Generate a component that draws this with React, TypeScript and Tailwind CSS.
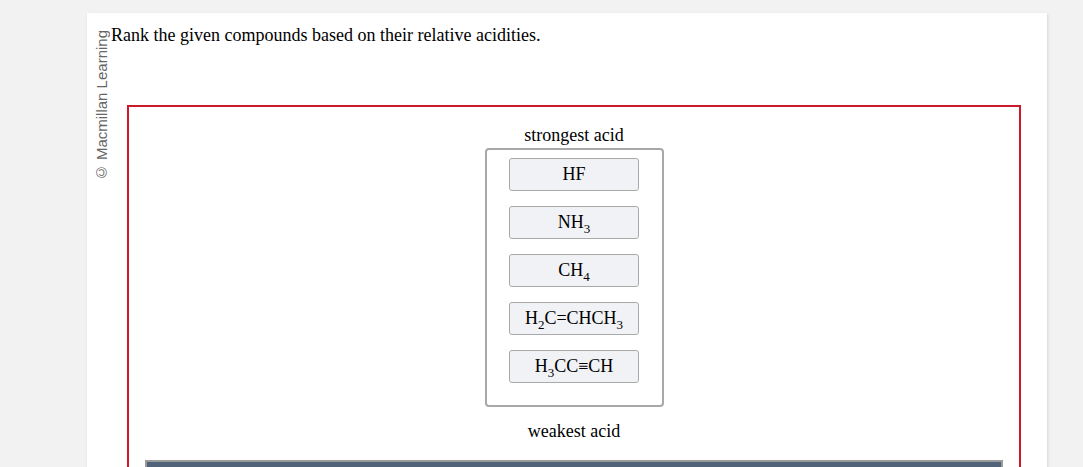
import React from 'react'

type Part = { t: string; sub?: boolean }

const compounds: Part[][] = [
  [{ t: 'HF' }],
  [{ t: 'NH' }, { t: '3', sub: true }],
  [{ t: 'CH' }, { t: '4', sub: true }],
  [{ t: 'H' }, { t: '2', sub: true }, { t: 'C=CHCH' }, { t: '3', sub: true }],
  [{ t: 'H' }, { t: '3', sub: true }, { t: 'CC≡CH' }],
]

function Formula({ parts }: { parts: Part[] }) {
  return (
    <span>
      {parts.map((p, i) =>
        p.sub ? (
          <sub key={i} className="text-[13px] relative top-[5px] leading-none">{p.t}</sub>
        ) : (
          <span key={i}>{p.t}</span>
        )
      )}
    </span>
  )
}

export default function App() {
  return (
    <div className="h-[467px] overflow-hidden bg-[#f2f2f2] pt-[13px] pl-[87px]">
      <div className="w-[960px] h-[480px] bg-white shadow-[1px_1px_3px_rgba(0,0,0,0.12)] flex">
        {/* copyright strip */}
        <div className="w-[24px] pl-[8px] pt-[17px]">
          <div className="[writing-mode:vertical-rl] rotate-180 text-[15px] leading-[14px] text-[#666] font-['Liberation_Sans',Arial,sans-serif]">
            © Macmillan Learning
          </div>
        </div>

        <div className="flex-1 font-['Liberation_Serif','Times_New_Roman',serif] text-black">
          <p className="text-[18px] leading-[20px] pt-[12px]">
            Rank the given compounds based on their relative acidities.
          </p>

          {/* ranking area */}
          <div className="mt-[60px] ml-[16px] w-[894px] border-2 border-[#cc1a2a] px-[16px] pt-[18px] h-[400px]">
            <div className="flex flex-col items-center">
              <div className="text-[18px] leading-[20px]">strongest acid</div>
              <div className="mt-[3px] w-[179px] h-[259px] border-2 border-[#a8a8a8] rounded-[4px] pt-[8px] flex flex-col items-center gap-[15px]">
                {compounds.map((c, i) => (
                  <div
                    key={i}
                    className="w-[130px] h-[33px] bg-[#f1f2f6] border border-[#a9a9a9] rounded-[3px] flex items-center justify-center text-[18px] leading-[20px] pb-[2px]"
                  >
                    <Formula parts={c} />
                  </div>
                ))}
              </div>
              <div className="mt-[14px] text-[18px] leading-[20px]">weakest acid</div>
            </div>
            <div className="mt-[19px] h-[40px] bg-[#516378] border-t-2 border-x-2 border-[#9a9a9a]" />
          </div>
        </div>
      </div>
    </div>
  )
}
